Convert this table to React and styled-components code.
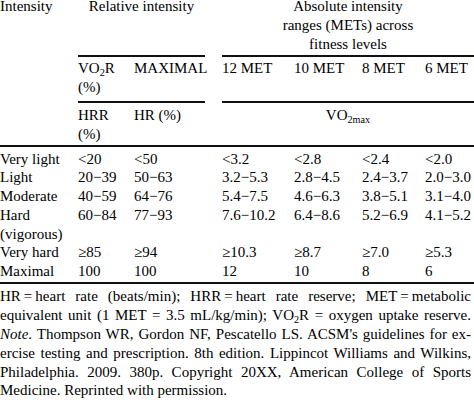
import React from "react";
import styled, { createGlobalStyle } from "styled-components";

const COLUMNS = "78px 56px 88px 72px 68px 63px 49px";

const GlobalStyle = createGlobalStyle`
  html, body {
    margin: 0;
    padding: 0;
    background: #fff;
    overflow: hidden;
  }
  body {
    font-family: "Liberation Serif", "Times New Roman", serif;
    color: #000;
  }
`;

const Page = styled.div`
  width: 474px;
  margin-top: -3px;
  font-size: 15px;
`;

const Row = styled.div`
  display: grid;
  grid-template-columns: ${COLUMNS};
  line-height: ${(p) => p.$lh || "19px"};
  padding-top: ${(p) => p.$pt || "0px"};
`;

const Cell = styled.div`
  grid-column: ${(p) => p.$col || "auto"};
  text-align: ${(p) => p.$align || "left"};
  padding-right: ${(p) => p.$pr || "0px"};
  white-space: nowrap;
`;

const RuleRow = styled.div`
  display: grid;
  grid-template-columns: ${COLUMNS};
  margin-top: ${(p) => p.$mt || "0px"};
`;

const Rule = styled.div`
  grid-column: ${(p) => p.$col || "1 / 8"};
  height: ${(p) => p.$h || "2px"};
  margin-right: ${(p) => p.$mr || "0px"};
  background: #111;
`;

const Body = styled.div`
  padding-top: 3px;
`;

const Sub = styled.sub`
  font-size: 0.68em;
  line-height: 0;
  vertical-align: -0.3em;
`;

const Footnote = styled.div`
  width: 471px;
  margin-top: 2.5px;
  line-height: 18.9px;
`;

const Line = styled.div`
  white-space: nowrap;
  text-align: ${(p) => (p.$last ? "left" : "justify")};
  text-align-last: ${(p) => (p.$last ? "left" : "justify")};
`;

const rows = [
  ["Very light", "<20", "<50", "<3.2", "<2.8", "<2.4", "<2.0"],
  ["Light", "20\u221239", "50\u221263", "3.2\u22125.3", "2.8\u22124.5", "2.4\u22123.7", "2.0\u22123.0"],
  ["Moderate", "40\u221259", "64\u221276", "5.4\u22127.5", "4.6\u22126.3", "3.8\u22125.1", "3.1\u22124.0"],
  ["Hard\n(vigorous)", "60\u221284", "77\u221293", "7.6\u221210.2", "6.4\u22128.6", "5.2\u22126.9", "4.1\u22125.2"],
  ["Very hard", "\u226585", "\u226594", "\u226510.3", "\u22658.7", "\u22657.0", "\u22655.3"],
  ["Maximal", "100", "100", "12", "10", "8", "6"],
];

const multi = (text) =>
  text.split("\n").map((part, i) => (
    <React.Fragment key={i}>
      {i > 0 && <br />}
      {part}
    </React.Fragment>
  ));

export default function App() {
  return (
    <Page>
      <GlobalStyle />
      <Row>
        <Cell>Intensity</Cell>
        <Cell $col="2 / 4" $align="center" $pr="17px">
          Relative intensity
        </Cell>
        <Cell $col="4 / 8" $align="center">
          Absolute intensity
          <br />
          ranges (METs) across
          <br />
          fitness levels
        </Cell>
      </Row>
      <RuleRow $mt="0.5px">
        <Rule $col="2 / 4" $mr="17px" />
        <Rule $col="4 / 8" />
      </RuleRow>
      <Row $pt="2.5px">
        <Cell />
        <Cell>
          VO<Sub>2</Sub>R
          <br />
          (%)
        </Cell>
        <Cell>MAXIMAL</Cell>
        <Cell>12 MET</Cell>
        <Cell>10 MET</Cell>
        <Cell>8 MET</Cell>
        <Cell>6 MET</Cell>
      </Row>
      <RuleRow $mt="3.5px">
        <Rule $col="2 / 4" $mr="17px" />
        <Rule $col="4 / 8" />
      </RuleRow>
      <Row $pt="3.5px">
        <Cell />
        <Cell>
          HRR
          <br />
          (%)
        </Cell>
        <Cell>HR (%)</Cell>
        <Cell $col="4 / 8" $align="center">
          VO<Sub>2max</Sub>
        </Cell>
      </Row>
      <RuleRow $mt="0.5px">
        <Rule />
      </RuleRow>
      <Body>
        {rows.map((r) => (
          <Row key={r[0]} $lh="18.8px">
            {r.map((v, i) => (
              <Cell key={i}>{multi(v)}</Cell>
            ))}
          </Row>
        ))}
      </Body>
      <RuleRow $mt="1.3px">
        <Rule />
      </RuleRow>
      <Footnote>
        <Line>
          HR{"\u2009"}={"\u2009"}heart rate (beats/min); HRR{"\u2009"}={"\u2009"}heart rate reserve; MET{"\u2009"}={"\u2009"}metabolic
        </Line>
        <Line>
          equivalent unit (1 MET = 3.5 mL/kg/min); VO<Sub>2</Sub>R = oxygen uptake reserve.
        </Line>
        <Line>
          <i>Note</i>. Thompson WR, Gordon NF, Pescatello LS. ACSM's guidelines for ex-
        </Line>
        <Line>
          ercise testing and prescription. 8th edition. Lippincot Williams and Wilkins,
        </Line>
        <Line>
          Philadelphia. 2009. 380p. Copyright 20XX, American College of Sports
        </Line>
        <Line $last>Medicine. Reprinted with permission.</Line>
      </Footnote>
    </Page>
  );
}
